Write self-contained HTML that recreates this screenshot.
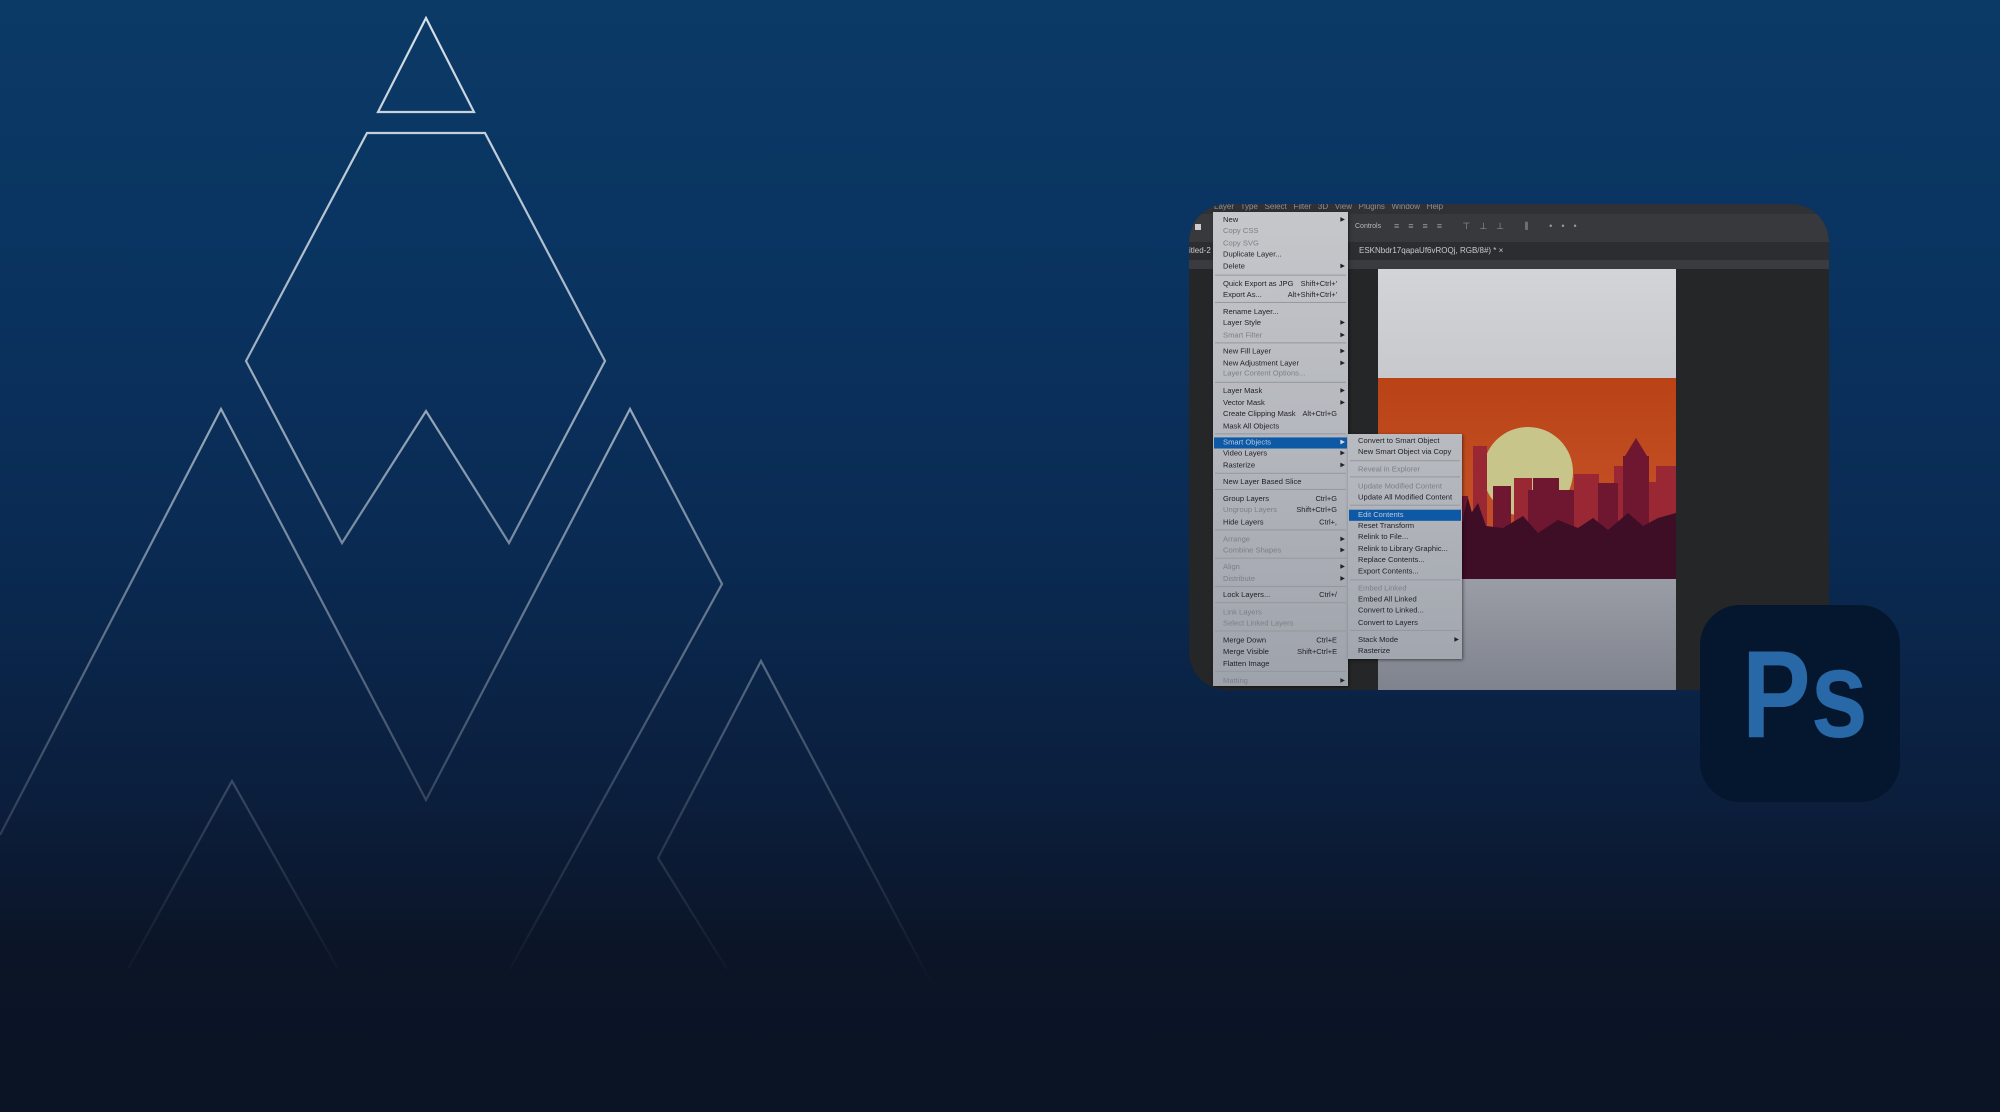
<!DOCTYPE html>
<html><head><meta charset="utf-8"><style>
*{margin:0;padding:0;box-sizing:border-box}
body{width:2000px;height:1112px;overflow:hidden;background:linear-gradient(180deg,#0b3a66 0%,#0a3360 25%,#0a2a52 50%,#0b1e3c 72%,#0b1527 85%,#0b1424 100%);font-family:"Liberation Sans",sans-serif;position:relative}
.panel{position:absolute;left:1189px;top:204px;width:640px;height:486px;border-radius:38px;overflow:hidden;background:#252628}
.mb{position:absolute;left:0;top:0;width:640px;height:10px;background:#303134;font-size:8px;color:#8d9098;line-height:6px;white-space:nowrap}
.ob{position:absolute;left:0;top:10px;width:640px;height:28px;background:#38393c;color:#777;font-size:8px}
.tb{position:absolute;left:0;top:38px;width:640px;height:18px;background:#2c2d30;font-size:8px;color:#b8bac0;line-height:18px;white-space:nowrap}
.rl{position:absolute;left:0;top:56px;width:640px;height:9px;background:#3a3b3e}
.doc{position:absolute;left:189px;top:65px;width:298px;height:421px;background:linear-gradient(180deg,#d3d4d8 0%,#c7c9cd 25%)}
.band{position:absolute;left:0;top:109px;width:298px;height:201px;background:linear-gradient(180deg,#b94316 0%,#c24d22 50%,#c05032 100%)}
.bot{position:absolute;left:0;top:310px;width:298px;height:111px;background:linear-gradient(180deg,#9a9da6,#7f838d)}
.menu{position:absolute;left:24px;top:8px;width:135px;height:474px;background:linear-gradient(180deg,#c5c7cb 0%,#b3b6bc 50%,#9ea2aa 100%);box-shadow:1px 1px 3px rgba(0,0,0,.5)}
.sub{position:absolute;left:159px;top:230px;width:114px;height:225px;background:linear-gradient(180deg,#b8bbc0,#a2a6ae);box-shadow:1px 1px 3px rgba(0,0,0,.5)}
.in{position:absolute;left:0;top:0;right:0;bottom:0;transform-origin:0 0}
.menu .in{transform:translateY(4px) scaleY(1.011)}
.sub .in{transform:translateY(3px) scaleY(1.01)}
.i{position:absolute;left:10px;font-size:7.6px;color:#1f2126;white-space:nowrap;line-height:10px}
.d{color:#7c7f86}
.k{position:absolute;right:11px;font-size:7.4px;color:#1f2126;line-height:10px}
.a{position:absolute;right:3px;font-size:6px;color:#1f2126;line-height:10px}
.s{position:absolute;left:2px;right:2px;height:1px;background:#9598a0}
.hl{position:absolute;left:1px;right:1px;height:11px;background:#0e59a6}
.ps{position:absolute;left:1700px;top:605px;width:200px;height:197px;border-radius:40px;background:#04172e}
.ps span{position:absolute;left:42px;top:28px;font-family:"Liberation Sans",sans-serif;font-weight:bold;font-size:124px;color:#2868a6;line-height:1;transform:scaleX(0.83);transform-origin:0 0;white-space:nowrap}
</style></head><body>
<svg width="2000" height="1112" style="position:absolute;left:0;top:0">
<defs><linearGradient id="g" gradientUnits="userSpaceOnUse" x1="0" y1="0" x2="0" y2="990"><stop offset="0" stop-color="#ffffff" stop-opacity=".85"/><stop offset=".45" stop-color="#ffffff" stop-opacity=".55"/><stop offset=".8" stop-color="#ffffff" stop-opacity=".18"/><stop offset="1" stop-color="#ffffff" stop-opacity="0"/></linearGradient></defs>
<g fill="none" stroke="url(#g)" stroke-width="2.2" stroke-linejoin="miter">
<polygon points="426,18 378,112 474,112"/>
<polygon points="367,133 485,133 605,361 509,543 426,411 342,543 246,361"/>
<polyline points="0,835 221,409 426,800 630,409 722,584 510,969"/>
<polyline points="128,969 232,781 338,969"/>
<polyline points="727,969 658,858 761,661 931,982"/>
</g></svg>
<div class="panel">
 <div class="mb"><span style="position:absolute;left:25px;top:0">Layer&nbsp;&nbsp; Type&nbsp;&nbsp; Select&nbsp;&nbsp; Filter&nbsp;&nbsp; 3D&nbsp;&nbsp; View&nbsp;&nbsp; Plugins&nbsp;&nbsp; Window&nbsp;&nbsp; Help</span></div>
 <div class="ob"><span style="position:absolute;left:6px;top:10px;width:6px;height:6px;background:#ccc"></span><span style="position:absolute;left:166px;top:9px;color:#bbb;font-size:7px">Controls</span><span style="position:absolute;left:205px;top:7px;color:#999;font-size:9px;letter-spacing:9px">≡≡≡≡ ⊤⊥⊥ ⫼ ••• </span></div>
 <div class="tb"><span style="position:absolute;left:0;color:#c8cacf">itled-2</span><span style="position:absolute;left:170px;color:#c8cacf">ESKNbdr17qapaUf6vROQj, RGB/8#) * ×</span></div>
 <div class="rl"></div>
 <div class="doc"><div class="band">
  <svg width="298" height="201" style="position:absolute;left:0;top:0">
   <circle cx="150" cy="94" r="45" fill="#c8c58a"/>
   <g fill="#9a2834"><rect x="136" y="100" width="18" height="101"/><rect x="196" y="96" width="25" height="105"/><rect x="236" y="88" width="16" height="113"/><rect x="278" y="88" width="20" height="113"/><rect x="95" y="68" width="14" height="133"/><rect x="258" y="104" width="20" height="97"/></g>
   <g fill="#6f1730"><rect x="0" y="112" width="8" height="89"/><rect x="8" y="100" width="24" height="101"/><polygon points="12,100 20,80 28,100"/><rect x="38" y="130" width="18" height="71"/><rect x="44" y="85" width="20" height="116"/><polygon points="46,85 54,65 62,85"/><rect x="70" y="118" width="20" height="83"/><rect x="115" y="108" width="18" height="93"/><rect x="150" y="112" width="46" height="89"/><rect x="155" y="100" width="26" height="20"/><rect x="220" y="105" width="20" height="96"/><rect x="245" y="78" width="26" height="123"/><polygon points="247,78 258,60 269,78"/></g>
   <g fill="#3d0e26"><path d="M0,150 L20,140 L40,148 L60,135 L75,150 L90,140 L100,125 L108,148 L125,150 L145,138 L160,155 L180,142 L200,150 L215,140 L230,152 L250,135 L265,148 L280,140 L298,135 L298,201 L0,201Z"/><polygon points="78,201 86,135 90,120 94,135 102,201"/></g>
  </svg></div><div class="bot"></div></div>
 <div class="menu"><div class="in">
  <div class="i" style="top:-1px">New</div><div class="a" style="top:-1px">▶</div>
  <div class="i d" style="top:10px">Copy CSS</div>
  <div class="i d" style="top:22px">Copy SVG</div>
  <div class="i" style="top:33px">Duplicate Layer...</div>
  <div class="i" style="top:45px">Delete</div><div class="a" style="top:45px">▶</div>
  <div class="s" style="top:58px"></div>
  <div class="i" style="top:62px">Quick Export as JPG</div><div class="k" style="top:62px">Shift+Ctrl+'</div>
  <div class="i" style="top:73px">Export As...</div><div class="k" style="top:73px">Alt+Shift+Ctrl+'</div>
  <div class="s" style="top:85px"></div>
  <div class="i" style="top:90px">Rename Layer...</div>
  <div class="i" style="top:101px">Layer Style</div><div class="a" style="top:101px">▶</div>
  <div class="i d" style="top:113px">Smart Filter</div><div class="a" style="top:113px">▶</div>
  <div class="s" style="top:125px"></div>
  <div class="i" style="top:129px">New Fill Layer</div><div class="a" style="top:129px">▶</div>
  <div class="i" style="top:141px">New Adjustment Layer</div><div class="a" style="top:141px">▶</div>
  <div class="i d" style="top:151px">Layer Content Options...</div>
  <div class="s" style="top:164px"></div>
  <div class="i" style="top:168px">Layer Mask</div><div class="a" style="top:168px">▶</div>
  <div class="i" style="top:180px">Vector Mask</div><div class="a" style="top:180px">▶</div>
  <div class="i" style="top:191px">Create Clipping Mask</div><div class="k" style="top:191px">Alt+Ctrl+G</div>
  <div class="i" style="top:203px">Mask All Objects</div>
  <div class="s" style="top:215px"></div>
  <div class="hl" style="top:219px"></div><div class="i" style="top:219px;color:#b8c8e0">Smart Objects</div><div class="a" style="top:219px;color:#ddd">▶</div>
  <div class="i" style="top:230px">Video Layers</div><div class="a" style="top:230px">▶</div>
  <div class="i" style="top:242px">Rasterize</div><div class="a" style="top:242px">▶</div>
  <div class="s" style="top:254px"></div>
  <div class="i" style="top:258px">New Layer Based Slice</div>
  <div class="s" style="top:270px"></div>
  <div class="i" style="top:275px">Group Layers</div><div class="k" style="top:275px">Ctrl+G</div>
  <div class="i d" style="top:286px">Ungroup Layers</div><div class="k d" style="top:286px">Shift+Ctrl+G</div>
  <div class="i" style="top:298px">Hide Layers</div><div class="k" style="top:298px">Ctrl+,</div>
  <div class="s" style="top:310px"></div>
  <div class="i d" style="top:315px">Arrange</div><div class="a" style="top:315px">▶</div>
  <div class="i d" style="top:326px">Combine Shapes</div><div class="a" style="top:326px">▶</div>
  <div class="s" style="top:338px"></div>
  <div class="i d" style="top:342px">Align</div><div class="a" style="top:342px">▶</div>
  <div class="i d" style="top:354px">Distribute</div><div class="a" style="top:354px">▶</div>
  <div class="s" style="top:366px"></div>
  <div class="i" style="top:370px">Lock Layers...</div><div class="k" style="top:370px">Ctrl+/</div>
  <div class="s" style="top:382px"></div>
  <div class="i d" style="top:387px">Link Layers</div>
  <div class="i d" style="top:398px">Select Linked Layers</div>
  <div class="s" style="top:410px"></div>
  <div class="i" style="top:415px">Merge Down</div><div class="k" style="top:415px">Ctrl+E</div>
  <div class="i" style="top:426px">Merge Visible</div><div class="k" style="top:426px">Shift+Ctrl+E</div>
  <div class="i" style="top:438px">Flatten Image</div>
  <div class="s" style="top:450px"></div>
  <div class="i d" style="top:455px">Matting</div><div class="a" style="top:455px">▶</div>
 </div></div>
 <div class="sub"><div class="in">
  <div class="i" style="top:-1px">Convert to Smart Object</div>
  <div class="i" style="top:10px">New Smart Object via Copy</div>
  <div class="s" style="top:23px"></div>
  <div class="i d" style="top:27px">Reveal in Explorer</div>
  <div class="s" style="top:39px"></div>
  <div class="i d" style="top:44px">Update Modified Content</div>
  <div class="i" style="top:55px">Update All Modified Content</div>
  <div class="s" style="top:67px"></div>
  <div class="hl" style="top:72px"></div><div class="i" style="top:72px;color:#b8c8e0">Edit Contents</div>
  <div class="i" style="top:83px">Reset Transform</div>
  <div class="i" style="top:94px">Relink to File...</div>
  <div class="i" style="top:106px">Relink to Library Graphic...</div>
  <div class="i" style="top:117px">Replace Contents...</div>
  <div class="i" style="top:128px">Export Contents...</div>
  <div class="s" style="top:141px"></div>
  <div class="i d" style="top:145px">Embed Linked</div>
  <div class="i" style="top:156px">Embed All Linked</div>
  <div class="i" style="top:167px">Convert to Linked...</div>
  <div class="i" style="top:179px">Convert to Layers</div>
  <div class="s" style="top:191px"></div>
  <div class="i" style="top:196px">Stack Mode</div><div class="a" style="top:196px">▶</div>
  <div class="i" style="top:207px">Rasterize</div>
 </div></div>
</div>
<div class="ps"><span>Ps</span></div>
</body></html>
